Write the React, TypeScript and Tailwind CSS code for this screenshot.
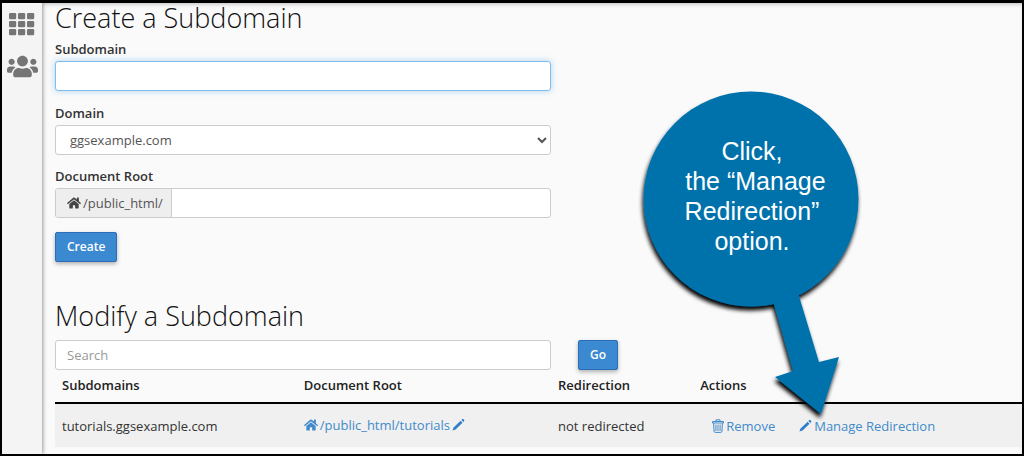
import { FaHome, FaUsers } from "react-icons/fa";

const fieldClass =
  "block h-[30px] w-full rounded-[3px] border border-[#ccc] bg-white px-[11px] text-[13px] text-[#555] outline-none placeholder:text-[#999]";
const buttonClass =
  "h-[30px] rounded-[2px] border border-[#2c6db8] bg-[#3a89d1] px-[11px] text-[12px] font-semibold text-white shadow-[0_2px_4px_rgba(0,0,0,0.3)]";
const linkClass = "inline-flex items-center gap-[2px] text-[#428bca]";

function GridIcon() {
  const steps = [0, 9, 18];
  return (
    <svg viewBox="0 0 26 23" className="h-[23px] w-[26px]" fill="#757575" aria-hidden="true">
      {[0, 8, 16].map((y) =>
        steps.map((x) => <rect key={`${x}-${y}`} x={x} y={y} width="7.2" height="6.3" rx="1.2" />),
      )}
    </svg>
  );
}

function PencilIcon() {
  return (
    <svg viewBox="0 0 13 13" className="size-[13px]" fill="#2f7fcb" aria-hidden="true">
      <path d="M0.4 12.6 1.6 9.5 8.6 2.8 10.5 4.7 3.6 11.5Z" />
      <path d="M9.4 2 10.3 1.1Q10.8.7 11.3 1.1L12.2 2Q12.6 2.5 12.2 3L11.3 3.9Z" />
    </svg>
  );
}

function TrashIcon() {
  return (
    <svg viewBox="0 0 12 14" className="h-[14px] w-[12px]" fill="none" stroke="#428bca" aria-hidden="true">
      <path d="M4 2V.8H8V2M.5 2.5H11.5V4H.5Z" />
      <path d="M1.6 4 2 12.2Q2.1 13.4 3.2 13.4H8.8Q9.9 13.4 10 12.2L10.4 4" />
      <path d="M3.9 5.5V12M6 5.5V12M8.1 5.5V12" />
    </svg>
  );
}

function Callout() {
  return (
    <aside className="pointer-events-none absolute top-[79px] left-[631px] h-[345px] w-[240px]">
      <svg viewBox="0 0 240 345" className="absolute inset-0 size-full" aria-hidden="true">
        <defs>
          <filter id="callout-shadow" x="-10%" y="-10%" width="120%" height="120%">
            <feDropShadow dx="-1" dy="4" stdDeviation="2" floodColor="#000" floodOpacity="1" />
          </filter>
        </defs>
        <g fill="#0072ab" filter="url(#callout-shadow)">
          <circle cx="118" cy="117" r="107.5" />
          <path d="M138 212 160 289 142 295 188 332 206 275 186 280 163 204Z" />
        </g>
      </svg>
      <p className="relative pt-[54px] pr-[2px] text-center font-['Liberation_Sans',Arial,sans-serif] text-[25px] leading-[30px] text-white">
        Click,
        <br />
        &nbsp;the “Manage
        <br />
        Redirection”
        <br />
        option.
      </p>
    </aside>
  );
}

export default function App() {
  return (
    <div className="relative flex min-h-screen border-x-2 border-t-[3px] border-b-2 border-black bg-[#fafafa] font-['Open_Sans','Noto_Sans',sans-serif] text-[13px] leading-[20px] text-[#333]">
      <nav aria-label="Main" className="flex w-10 shrink-0 flex-col items-center gap-[15px] bg-[#f4f4f4] pt-[10px] shadow-[1px_0_4px_rgba(0,0,0,0.35)]">
        <a href="#apps" aria-label="Applications">
          <GridIcon />
        </a>
        <a href="#users" aria-label="User manager">
          <FaUsers className="size-[31px] text-[#757575]" />
        </a>
      </nav>

      <main className="min-w-0 flex-1 pl-[13px] shadow-[inset_0_3px_4px_-2px_rgba(0,0,0,0.25)]">
        <h1 className="text-[27px] leading-[30px] font-light text-[#111]">Create a Subdomain</h1>
        <form className="w-full max-w-[496px]" onSubmit={(e) => e.preventDefault()}>
          <div className="pt-[6px]">
            <label htmlFor="subdomain" className="mb-[2px] block font-semibold">Subdomain</label>
            <input
              id="subdomain"
              type="text"
              className="block h-[30px] w-full rounded-[3px] border border-[#80bdef] bg-white px-[11px] text-[13px] shadow-[0_0_6px_rgba(102,175,233,0.5)] outline-none"
            />
          </div>
          <div className="pt-[12px]">
            <label htmlFor="domain" className="mb-[2px] block font-semibold">Domain</label>
            <select id="domain" className="block h-[30px] w-full rounded-[3px] border border-[#ccc] bg-white pl-[10px] text-[13px] text-[#555]">
              <option>ggsexample.com</option>
            </select>
          </div>
          <div className="pt-[11px]">
            <label htmlFor="docroot" className="mb-[2px] block font-semibold">Document Root</label>
            <div className="flex h-[30px] overflow-hidden rounded-[3px] border border-[#ccc] bg-white">
              <span className="flex items-center gap-[2px] border-r border-[#ccc] bg-[#eee] pr-[8px] pl-[11px] text-[#555]">
                <FaHome className="size-[14px] text-[#444]" />
                /public_html/
              </span>
              <input id="docroot" type="text" className="min-w-0 flex-1 px-[11px] outline-none" />
            </div>
          </div>
          <button type="submit" className={`mt-[14px] ${buttonClass}`}>Create</button>
        </form>

        <h2 className="mt-[39px] text-[27px] leading-[30px] font-light text-[#111]">Modify a Subdomain</h2>
        <form className="mt-[9px] flex gap-[27px]" onSubmit={(e) => e.preventDefault()}>
          <div className="w-full max-w-[496px]">
            <input type="search" aria-label="Search" placeholder="Search" className={fieldClass} />
          </div>
          <button type="submit" className={buttonClass}>Go</button>
        </form>

        <table className="mb-[6px] w-full table-fixed border-collapse text-left">
          <thead>
            <tr className="border-b-2 border-black text-[#222]">
              <th className="w-[25%] px-[7px] pt-[5px] pb-[7px] font-semibold">Subdomains</th>
              <th className="w-[26.3%] px-[7px] pt-[5px] pb-[7px] font-semibold">Document Root</th>
              <th className="w-[14.7%] px-[7px] pt-[5px] pb-[7px] font-semibold">Redirection</th>
              <th className="px-[7px] pt-[5px] pb-[7px] font-semibold">Actions</th>
            </tr>
          </thead>
          <tbody>
            <tr className="h-[44px] bg-[#f0f0f0]">
              <td className="px-[7px]">tutorials.ggsexample.com</td>
              <td className="px-[7px]">
                <a href="#tutorials" className={linkClass}>
                  <FaHome className="size-[14px]" />
                  /public_html/tutorials
                  <PencilIcon />
                </a>
              </td>
              <td className="px-[7px]">not redirected</td>
              <td className="px-[7px]">
                <div className="flex gap-[24px] pl-[12px]">
                  <a href="#remove" className={linkClass}>
                    <TrashIcon />
                    Remove
                  </a>
                  <a href="#redirect" className={linkClass}>
                    <PencilIcon />
                    Manage Redirection
                  </a>
                </div>
              </td>
            </tr>
          </tbody>
        </table>
      </main>
      <Callout />
    </div>
  );
}
